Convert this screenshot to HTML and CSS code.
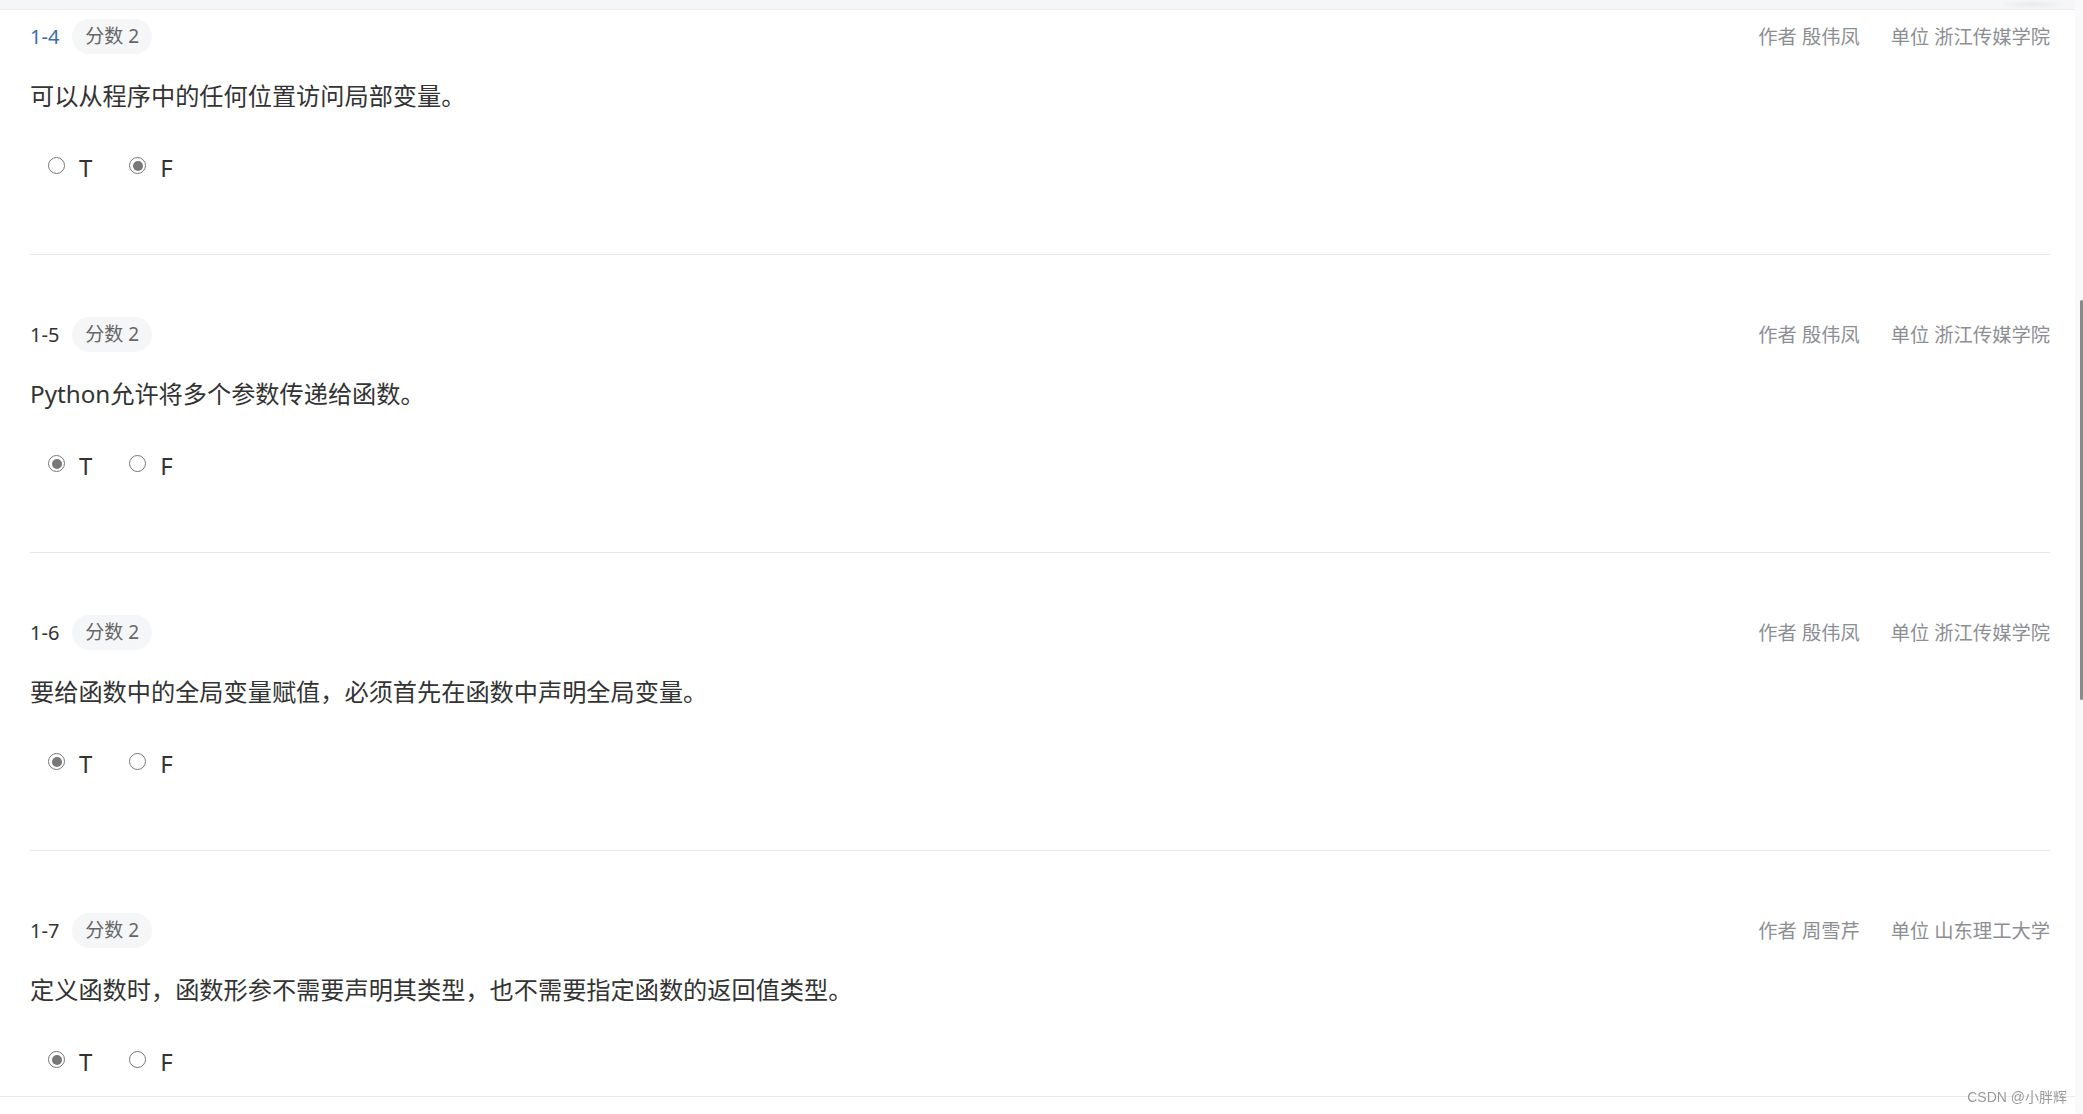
FILE: index.html
```html
<!DOCTYPE html>
<html lang="zh-CN">
<head>
<meta charset="utf-8">
<title>判断题</title>
<link rel="stylesheet" href="styles.css">
</head>
<body>
<div class="topbar"></div>
<main class="list">
  <section class="item first">
    <div class="head">
      <div class="left"><span class="num active">1-4</span><span class="score">分数 2</span></div>
      <div class="meta"><span>作者 殷伟凤</span><span>单位 浙江传媒学院</span></div>
    </div>
    <p class="q">可以从程序中的任何位置访问局部变量。</p>
    <div class="opts">
      <label class="opt"><span class="radio"></span><span class="lbl">T</span></label>
      <label class="opt"><span class="radio on"></span><span class="lbl">F</span></label>
    </div>
  </section>
  <section class="item">
    <div class="head">
      <div class="left"><span class="num">1-5</span><span class="score">分数 2</span></div>
      <div class="meta"><span>作者 殷伟凤</span><span>单位 浙江传媒学院</span></div>
    </div>
    <p class="q">Python允许将多个参数传递给函数。</p>
    <div class="opts">
      <label class="opt"><span class="radio on"></span><span class="lbl">T</span></label>
      <label class="opt"><span class="radio"></span><span class="lbl">F</span></label>
    </div>
  </section>
  <section class="item">
    <div class="head">
      <div class="left"><span class="num">1-6</span><span class="score">分数 2</span></div>
      <div class="meta"><span>作者 殷伟凤</span><span>单位 浙江传媒学院</span></div>
    </div>
    <p class="q">要给函数中的全局变量赋值，必须首先在函数中声明全局变量。</p>
    <div class="opts">
      <label class="opt"><span class="radio on"></span><span class="lbl">T</span></label>
      <label class="opt"><span class="radio"></span><span class="lbl">F</span></label>
    </div>
  </section>
  <section class="item last">
    <div class="head">
      <div class="left"><span class="num">1-7</span><span class="score">分数 2</span></div>
      <div class="meta"><span>作者 周雪芹</span><span>单位 山东理工大学</span></div>
    </div>
    <p class="q">定义函数时，函数形参不需要声明其类型，也不需要指定函数的返回值类型。</p>
    <div class="opts">
      <label class="opt"><span class="radio on"></span><span class="lbl">T</span></label>
      <label class="opt"><span class="radio"></span><span class="lbl">F</span></label>
    </div>
  </section>
</main>
<div class="bottombar"><span class="wm">CSDN @小胖辉</span></div>
<div class="track"><div class="thumb"></div></div>
</body>
</html>
```
FILE: styles.css
```css
html, body {
  margin: 0;
  padding: 0;
  background: #ffffff;
  overflow: hidden;
  height: 100%;
}
body {
  font-family: "Noto Sans", "Noto Sans CJK SC", sans-serif;
  color: #333333;
}
.topbar {
  height: 9px;
  background: #f5f6f7;
  border-bottom: 1px solid #ececee;
  width: 2075px;
  position: relative;
}
.topbar::after {
  content: "";
  position: absolute;
  right: 8px;
  top: 0;
  width: 70px;
  height: 9px;
  background: radial-gradient(ellipse at center, rgba(0,0,0,0.05), rgba(0,0,0,0) 70%);
}
.list {
  width: 2020px;
  padding: 0 25px 0 30px;
}
.item {
  padding: 62px 0 68px;
  border-bottom: 1px solid #e8e8e8;
}
.item.first {
  padding-top: 9px;
}
.item.last {
  border-bottom: none;
  padding-bottom: 16px;
}
.head {
  height: 35px;
  display: flex;
  justify-content: space-between;
  align-items: center;
}
.left {
  display: flex;
  align-items: center;
  gap: 13px;
}
.num {
  font-size: 20px;
  color: #333333;
}
.num.active {
  color: #3a6cb2;
}
.score {
  height: 35px;
  line-height: 35px;
  padding: 0 13px;
  border-radius: 18px;
  background: #f5f6f8;
  color: #666666;
  font-size: 19px;
}
.meta {
  display: flex;
  gap: 31px;
  font-size: 19.3px;
  line-height: 33px;
  color: #8c8e93;
}
.q {
  margin: 24px 0 0;
  font-size: 24.2px;
  line-height: 36px;
  color: #333333;
}
.opts {
  margin-top: 36px;
  height: 36px;
  display: flex;
  align-items: center;
  padding-left: 18px;
}
.opt {
  display: flex;
  align-items: center;
  margin-right: 37px;
}
.radio {
  box-sizing: border-box;
  width: 17px;
  height: 17px;
  border: 1.7px solid #777777;
  border-radius: 50%;
  margin-right: 14px;
  margin-bottom: 5px;
  display: flex;
  align-items: center;
  justify-content: center;
  background: #fff;
}
.radio.on::after {
  content: "";
  width: 10px;
  height: 10px;
  border-radius: 50%;
  background: #787878;
}
.lbl {
  font-size: 24px;
  line-height: 36px;
  color: #333333;
}
.bottombar {
  position: fixed;
  left: 0;
  right: 0;
  bottom: 0;
  height: 17px;
  border-top: 1px solid #ebebeb;
  background: #ffffff;
}
.wm {
  position: absolute;
  right: 16px;
  top: -9px;
  font-family: "Liberation Sans", Arial, "Noto Sans CJK SC", sans-serif;
  font-size: 14px;
  line-height: 18px;
  color: #9a9a9a;
}
.track {
  position: fixed;
  top: 0;
  right: 0;
  bottom: 0;
  width: 8px;
  background: #f9f9f9;
}
.thumb {
  position: absolute;
  left: 5px;
  top: 300px;
  width: 3px;
  height: 400px;
  border-radius: 2px;
  background: #8a8a8a;
}
```
